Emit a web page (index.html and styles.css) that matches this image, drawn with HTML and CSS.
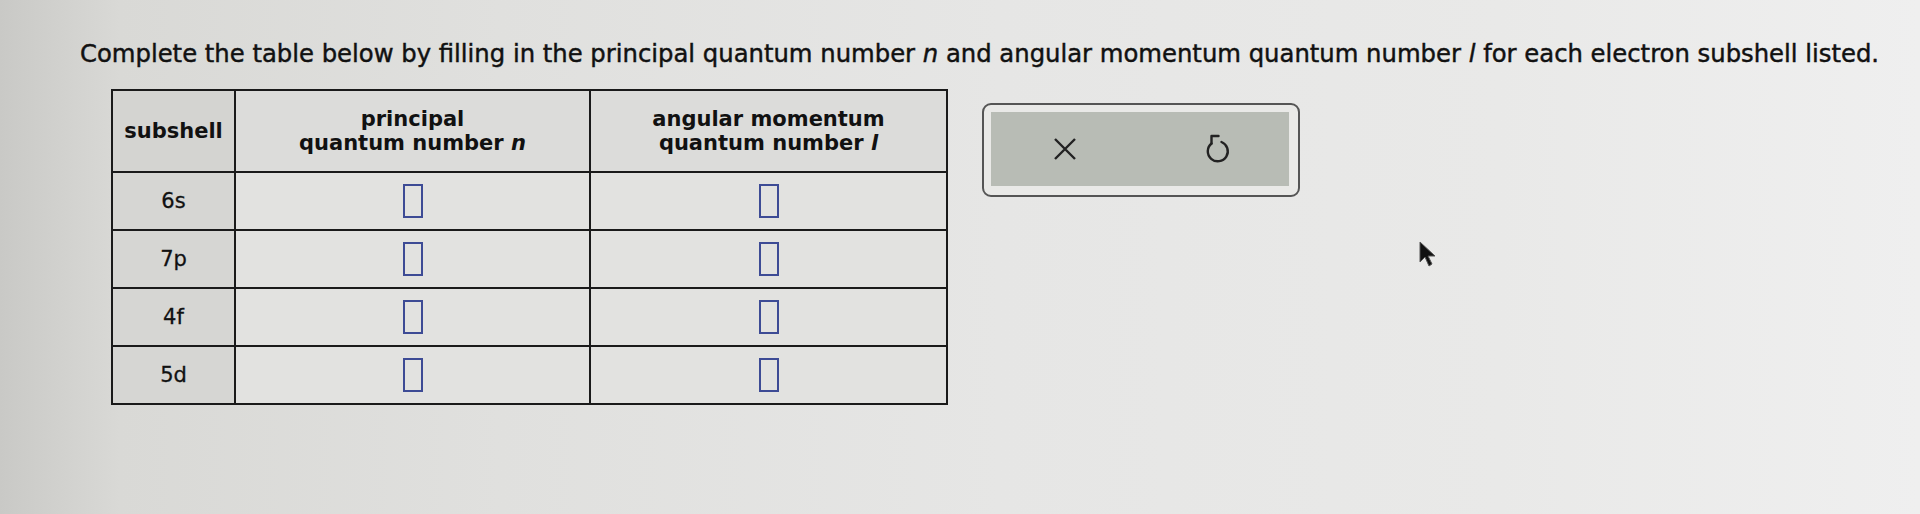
FILE: index.html
```html
<!DOCTYPE html>
<html>
<head>
<meta charset="utf-8">
<link rel="stylesheet" href="styles.css">
</head>
<body>
<div class="page">
  <p class="prompt">Complete the table below by filling in the principal quantum number <i>n</i> and angular momentum quantum number <i>l</i> for each electron subshell listed.</p>
  <div class="work">
    <table class="qt">
      <thead>
        <tr>
          <th class="c1">subshell</th>
          <th class="c2">principal<br>quantum number <i>n</i></th>
          <th class="c3">angular momentum<br>quantum number <i>l</i></th>
        </tr>
      </thead>
      <tbody>
        <tr><td class="c1">6s</td><td><span class="box"></span></td><td><span class="box"></span></td></tr>
        <tr><td class="c1">7p</td><td><span class="box"></span></td><td><span class="box"></span></td></tr>
        <tr><td class="c1">4f</td><td><span class="box"></span></td><td><span class="box"></span></td></tr>
        <tr><td class="c1">5d</td><td><span class="box"></span></td><td><span class="box"></span></td></tr>
      </tbody>
    </table>
    <div class="tools">
      <div class="tools-inner">
        <button class="tbtn" aria-label="clear">
          <svg width="26" height="26" viewBox="0 0 26 26"><path d="M3 3 L23 23 M23 3 L3 23" stroke="#222" stroke-width="2.4" fill="none"/></svg>
        </button>
        <button class="tbtn" aria-label="undo">
          <svg width="30" height="34" viewBox="0 0 30 34"><path d="M9.5 11.5 A10 10 0 1 0 19.5 10" stroke="#222" stroke-width="2.4" fill="none" stroke-linecap="round"/><path d="M9.5 4 L9.5 11.5 M9.5 4 L16.5 4" stroke="#222" stroke-width="2.4" fill="none" stroke-linecap="round" stroke-linejoin="round"/></svg>
        </button>
      </div>
    </div>
  </div>
  <svg class="cursor" width="22" height="30" viewBox="0 0 22 30"><path d="M2 2 L2 22 L7 17 L11 26 L14 24 L10 16 L17 16 Z" fill="#111" stroke="#555" stroke-width="1"/></svg>
</div>
</body>
</html>
```
FILE: styles.css
```css
html, body {
  margin: 0;
  padding: 0;
}
body {
  width: 1920px;
  height: 514px;
  overflow: hidden;
  background: linear-gradient(90deg, #c9c9c6 0px, #d9d9d6 120px, #e0e0de 500px, #e6e6e5 1000px, #e9e9e8 1500px, #efefef 1920px);
  font-family: "DejaVu Sans", Verdana, sans-serif;
  color: #111;
}
.page {
  position: relative;
  padding: 40px 0 0 80px;
}
.prompt {
  margin: 0;
  font-size: 24.3px;
  line-height: 28px;
  font-weight: normal;
  -webkit-text-stroke: 0.45px #111;
  white-space: nowrap;
}
.work {
  display: flex;
  align-items: flex-start;
  margin-top: 21px;
  margin-left: 31px;
  gap: 34px;
}
.qt {
  border-collapse: collapse;
  border: 2px solid #1a1a1a;
}
.qt th, .qt td {
  border: 2px solid #1a1a1a;
  text-align: center;
  padding: 0;
}
.qt th {
  height: 80px;
  font-size: 21px;
  line-height: 24px;
  font-weight: bold;
  background: #dcdcda;
}
.qt td {
  height: 56px;
  font-size: 21px;
  background: #e2e2e0;
  -webkit-text-stroke: 0.3px #111;
}
.qt td.c1 {
  background: #d6d6d3;
}
.qt th.c1 {
  background: #d4d4d1;
}
.c1 { width: 121px; }
.c2 { width: 353px; }
.c3 { width: 355px; }
.box {
  display: inline-block;
  width: 16px;
  height: 30px;
  border: 2px solid #3d4b95;
  vertical-align: middle;
}
.tools {
  margin-top: 14px;
  width: 318px;
  height: 94px;
  box-sizing: border-box;
  border: 2px solid #555;
  border-radius: 9px;
  padding: 7px 9px 9px 7px;
  background: #e9e9e7;
}
.tools-inner {
  height: 100%;
  background: #b8bcb5;
  display: flex;
  align-items: center;
  justify-content: space-between;
  padding: 0 52px 0 54px;
}
.tbtn {
  background: none;
  border: none;
  padding: 0;
  display: flex;
  align-items: center;
  justify-content: center;
  width: 40px;
  height: 40px;
}
.cursor {
  position: absolute;
  left: 1418px;
  top: 240px;
}
```
